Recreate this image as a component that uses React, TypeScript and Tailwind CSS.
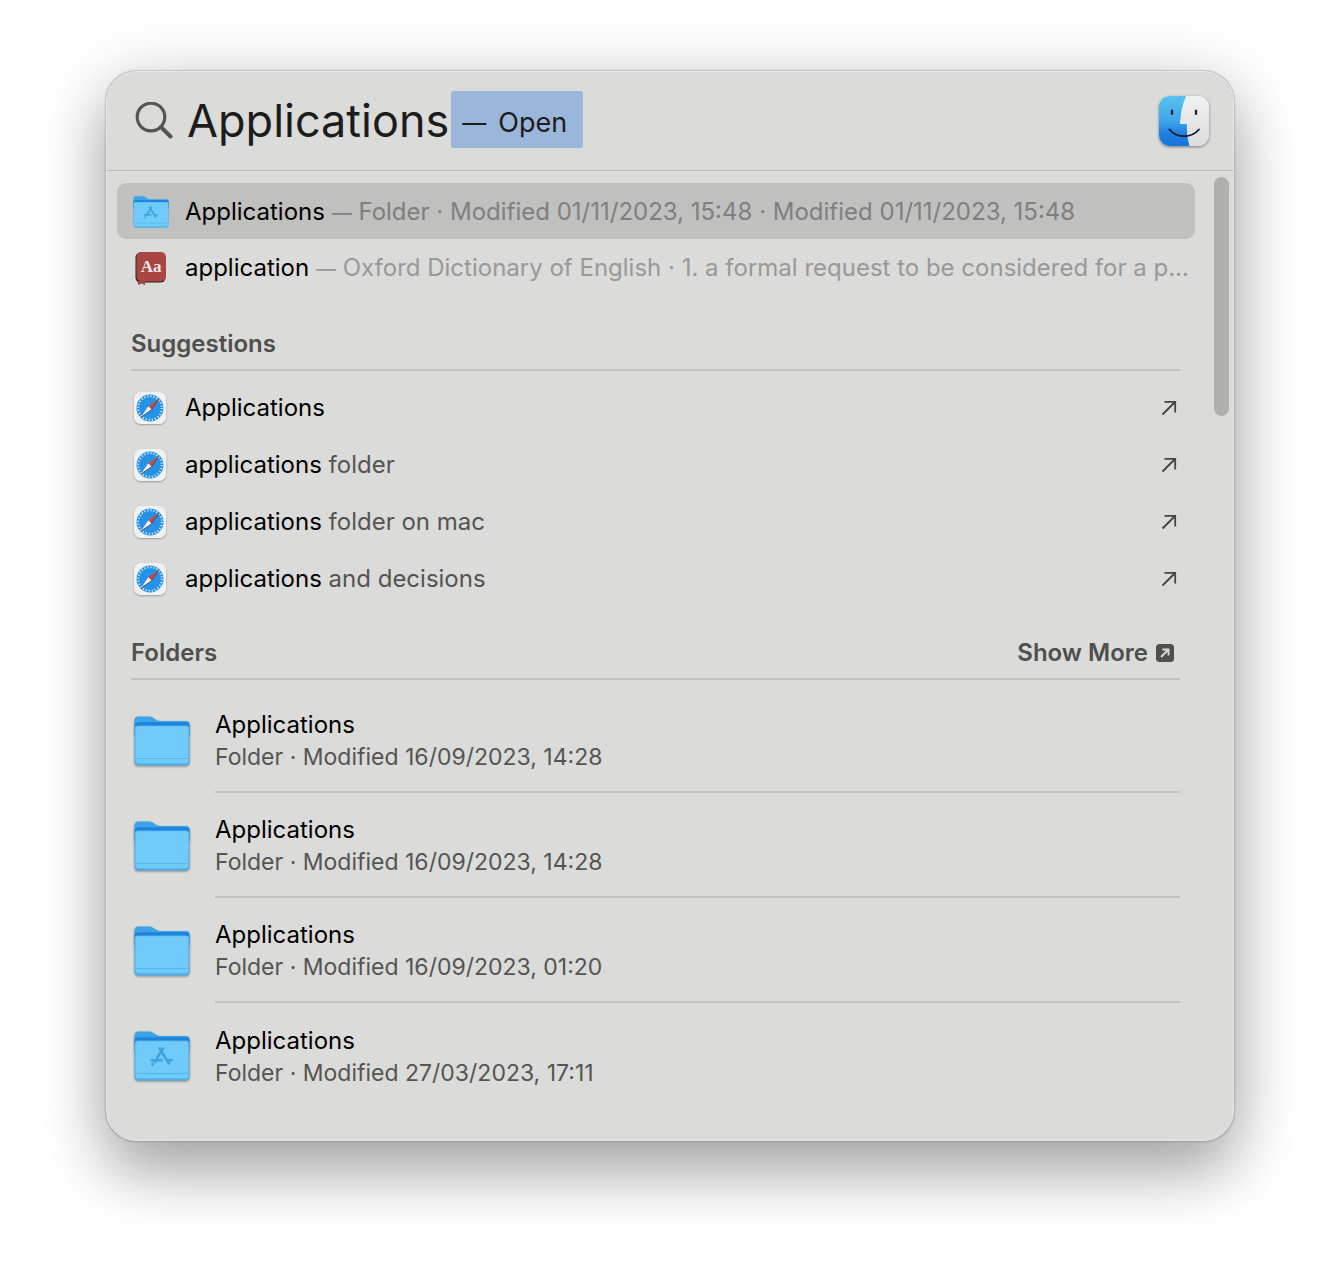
import React, { useState, ChangeEvent } from "react";

const suggestions = [
  { match: "Applications", rest: "" },
  { match: "applications", rest: " folder" },
  { match: "applications", rest: " folder on mac" },
  { match: "applications", rest: " and decisions" },
];

const folders = [
  { name: "Applications", modified: "16/09/2023, 14:28", apps: false },
  { name: "Applications", modified: "16/09/2023, 14:28", apps: false },
  { name: "Applications", modified: "16/09/2023, 01:20", apps: false },
  { name: "Applications", modified: "27/03/2023, 17:11", apps: true },
];

function SearchIcon() {
  return (
    <svg viewBox="0 0 38 38" className="h-[38px] w-[38px] shrink-0" fill="none" stroke="#555554" aria-hidden="true">
      <circle cx="16" cy="15" r="13.8" strokeWidth="3.2" />
      <path d="M26 25L35.500 34.500" strokeWidth="4" strokeLinecap="round" />
    </svg>
  );
}

function FinderIcon() {
  return (
    <svg viewBox="0 0 50 50" className="h-[50px] w-[50px] shrink-0 rounded-[11px] shadow-[0_1px_3px_rgba(0,0,0,0.45)]" aria-hidden="true">
      <defs>
        <linearGradient id="finder-blue" x1="0" y1="0" x2="0" y2="1">
          <stop offset="0" stopColor="#57c3f0" />
          <stop offset="0.5" stopColor="#3fa6ea" />
          <stop offset="0.75" stopColor="#1f7fe0" />
          <stop offset="1" stopColor="#1875da" />
        </linearGradient>
        <linearGradient id="finder-white" x1="0" y1="0" x2="0" y2="1">
          <stop offset="0" stopColor="#f1f1f1" />
          <stop offset="1" stopColor="#dcdcdd" />
        </linearGradient>
      </defs>
      <rect width="50" height="50" fill="url(#finder-white)" />
      <path d="M0 0H27.500C24 8 22 17 21.500 27.500H28.500C28 36 29 43 31 50H0Z" fill="url(#finder-blue)" />
      <path d="M27.500 0C24 8 22 17 21.500 27.500H28.500C28 36 29 43 31 50" fill="none" stroke="#f4f8fb" strokeWidth="0.8" />
      <path d="M13 13.700V18.700M37 13.700V18.700" stroke="#16222c" strokeWidth="2.300" />
      <path d="M10.500 33.500C18 42.500 32 42.500 40 33.500" fill="none" stroke="#101a26" strokeWidth="1.800" strokeLinecap="round" />
    </svg>
  );
}

function FolderIcon({ apps, className }: { apps: boolean; className: string }) {
  return (
    <svg viewBox="0 0 56 50" className={className} aria-hidden="true">
      <path d="M0.500 5C0.500 2 1.500 0.500 4.500 0.500H15C20 0.500 21 5 26 5H52C54.500 5 55.500 6.500 55.500 9V20H0.500Z" fill="#3aa4e8" />
      <path d="M0.500 9.500C0.500 7.500 2 6.300 4.500 6.300H52C54.500 6.300 55.500 7.500 55.500 9.500V20H0.500Z" fill="#1d83dc" />
      <path d="M0.500 13C0.500 10.500 1.500 9.500 4 9.500H52C54.500 9.500 55.500 10.500 55.500 13V45C55.500 48 54 49.500 51.500 49.500H4.500C2 49.500 0.500 48 0.500 45Z" fill="#4eb0ea" />
      <path d="M1.500 13C1.500 11 2.500 10.200 4 10.200H52C53.500 10.200 54.500 11 54.500 13V44C54.500 46.500 53 47.300 51 47.300H5C3 47.300 1.500 46.500 1.500 44Z" fill="#70cbfb" />
      <path d="M2 42.500H54" stroke="#55b5ef" strokeWidth="1" />
      {apps && (
        <g stroke="#3fa3dc" strokeWidth="2.600" fill="none">
          <path d="M29.500 16.500L20.500 31.500M25 16.500L35.500 33.500M16.500 29.300H29M33.500 29.300H38.500" />
          <path d="M19.200 32L17.800 34.500" />
        </g>
      )}
    </svg>
  );
}

function DictionaryIcon() {
  return (
    <svg viewBox="0 0 34 34" className="h-[34px] w-[34px] shrink-0" aria-hidden="true">
      <rect x="1.500" y="1.600" width="30" height="30" rx="5" fill="#2b2424" />
      <path d="M4 30H11V34L7.500 32.600L4 34Z" fill="#a8403d" />
      <rect x="2.500" y="1" width="29.500" height="29.500" rx="5" fill="#a94643" />
      <text x="17.200" y="21" textAnchor="middle" fill="#f5e9e7" fontSize="17" fontWeight="700" fontFamily="'Liberation Serif', serif">
        Aa
      </text>
    </svg>
  );
}

function SafariIcon() {
  return (
    <svg viewBox="0 0 32 32" className="h-8 w-8 shrink-0 rounded-[7px] shadow-[0_1px_2px_rgba(0,0,0,0.3)]" aria-hidden="true">
      <rect width="32" height="32" fill="#f1f1f1" />
      <circle cx="16" cy="16" r="13.500" fill="#2492e6" />
      <circle cx="16" cy="16" r="11.800" fill="none" stroke="#d8ecfa" strokeWidth="2" strokeDasharray="1.200 1.889" />
      <path d="M25 7L17.700 17.700L14.300 14.300Z" fill="#c9463f" />
      <path d="M7 25L17.700 17.700L14.300 14.300Z" fill="#f3f3f3" />
      <path d="M7 25L17.700 17.700L25 7" fill="none" stroke="#5d4850" strokeWidth="0.900" />
    </svg>
  );
}

function ArrowIcon() {
  return (
    <svg viewBox="0 0 16 16" className="h-4 w-4 shrink-0" fill="none" stroke="#454544" strokeWidth="1.800" aria-hidden="true">
      <path d="M1.500 14.500L14 2M3.500 1.800H14.200V12.500" />
    </svg>
  );
}

function App() {
  const [query, setQuery] = useState("Applications");

  const handleChange = (e: ChangeEvent<HTMLInputElement>) => {
    setQuery(e.target.value);
  };

  return (
    <div className="min-h-screen bg-white px-[106px] pt-[71px] pb-[139px] font-['Inter','Liberation_Sans',sans-serif] text-black">
      <main className="rounded-[30px] border border-[#e9e9e8] bg-[#dbdbd9] shadow-[0_0_2px_rgba(0,0,0,0.5),0_36px_60px_rgba(0,0,0,0.24),0_10px_70px_rgba(0,0,0,0.2)]">
        <header className="flex h-[99px] items-center border-b border-[#b9b9b7] pr-6 pl-7">
          <SearchIcon />
          <input
            type="text"
            aria-label="Spotlight search"
            value={query}
            onChange={handleChange}
            className="ml-3.5 min-w-0 bg-transparent text-[45px] leading-[56px] text-[#1c1c1c] outline-none [field-sizing:content]"
          />
          <span className="mb-1 ml-0.5 flex h-[57px] items-center gap-3 rounded-[3px] bg-[#9ab6da] pt-2 pr-4 pl-[11px] text-[27px] whitespace-nowrap text-[#1c1c1c]">
            <span className="text-[24px]">—</span>
            <span>Open</span>
          </span>
          <div className="ml-auto">
            <FinderIcon />
          </div>
        </header>

        <div className="flex items-start pt-1.5 pr-1">
          <div className="min-w-0 flex-1 pt-1.5 pl-2.5">
            <ul>
              <li>
                <button type="button" className="flex h-14 w-full items-center gap-4 rounded-[9px] bg-[#c0c0be] pt-0.5 pr-2 pl-4 text-left text-[24px]">
                  <FolderIcon apps className="h-8 w-9 shrink-0" />
                  <span className="truncate text-[#7f7f7e]">
                    <span className="text-black">Applications</span> <span className="text-[20px]">—</span> Folder · Modified 01/11/2023, 15:48 · Modified 01/11/2023, 15:48
                  </span>
                </button>
              </li>
              <li>
                <button type="button" className="flex h-[58px] w-full items-center gap-[17px] pr-1 pl-[17px] text-left text-[24px]">
                  <DictionaryIcon />
                  <span className="truncate text-[#989897]">
                    <span className="text-black">application</span> <span className="text-[20px]">—</span> Oxford Dictionary of English · 1. a formal request to be considered for a p...
                  </span>
                </button>
              </li>
            </ul>

            <section className="mr-[15px] ml-3.5 pt-[21px]">
              <h2 className="flex h-[53px] items-center border-b-2 border-[#c3c3c1] text-[24px] font-semibold text-[#4f4f4e]">Suggestions</h2>
              <ul className="pt-2">
                {suggestions.map((item, i) => (
                  <li key={i}>
                    <button type="button" className="flex h-[57px] w-full items-center pr-[3px] pl-[3px] text-left text-[24px] whitespace-pre">
                      <SafariIcon />
                      <span className="ml-[19px] flex-1 text-[#545453]">
                        <span className="text-black">{item.match}</span>
                        {item.rest}
                      </span>
                      <ArrowIcon />
                    </button>
                  </li>
                ))}
              </ul>
            </section>

            <section className="mr-[15px] ml-3.5 pt-5">
              <div className="flex h-[53px] items-center justify-between border-b-2 border-[#c3c3c1] pr-1.5 text-[24px] font-semibold text-[#4f4f4e]">
                <h2>Folders</h2>
                <button type="button" className="flex items-center gap-2">
                  Show More
                  <svg viewBox="0 0 18 18" className="h-[18px] w-[18px]" aria-hidden="true">
                    <rect width="18" height="18" rx="3.500" fill="#4f4f4e" />
                    <path d="M5 13L12 6M6.500 5.500H12.500V11.500" fill="none" stroke="#dbdbd9" strokeWidth="1.900" />
                  </svg>
                </button>
              </div>
              <ul className="pt-2 pb-8">
                {folders.map((folder, i) => (
                  <li key={i} className="group flex items-center">
                    <FolderIcon apps={folder.apps} className="ml-[3px] h-[50px] w-14 shrink-0 drop-shadow-[0_1px_1px_rgba(0,0,0,0.4)]" />
                    <button type="button" className="ml-[25px] h-[105px] flex-1 border-b-2 border-[#c3c3c1] pt-0.5 text-left group-last:border-b-0">
                      <span className="block text-[24px] leading-8">{folder.name}</span>
                      <span className="block text-[23px] leading-8 text-[#545453]">Folder · Modified {folder.modified}</span>
                    </button>
                  </li>
                ))}
              </ul>
            </section>
          </div>

          <div className="ml-[19px] h-[239px] w-[15px] shrink-0 rounded-full bg-[#b0b0af]" />
        </div>
      </main>
    </div>
  );
}

export default App;
